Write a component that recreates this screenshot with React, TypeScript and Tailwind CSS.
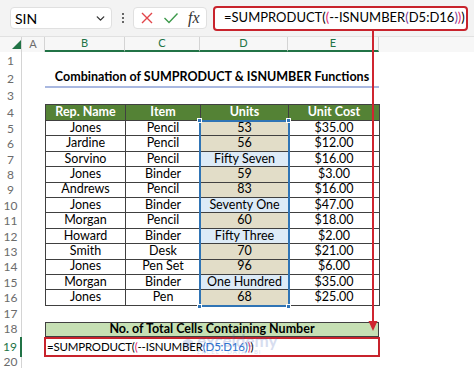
import React from "react";
import { ChevronDown } from "lucide-react";

type Row = { name: string; item: string; units: string; cost: string };

const rows: Row[] = [
  { name: "Jones", item: "Pencil", units: "53", cost: "$35.00" },
  { name: "Jardine", item: "Pencil", units: "56", cost: "$12.00" },
  { name: "Sorvino", item: "Pencil", units: "Fifty Seven", cost: "$16.00" },
  { name: "Jones", item: "Binder", units: "59", cost: "$3.00" },
  { name: "Andrews", item: "Pencil", units: "83", cost: "$16.00" },
  { name: "Jones", item: "Binder", units: "Seventy One", cost: "$47.00" },
  { name: "Morgan", item: "Pencil", units: "60", cost: "$18.00" },
  { name: "Howard", item: "Binder", units: "Fifty Three", cost: "$2.00" },
  { name: "Smith", item: "Desk", units: "70", cost: "$21.00" },
  { name: "Jones", item: "Pen Set", units: "96", cost: "$6.00" },
  { name: "Morgan", item: "Binder", units: "One Hundred", cost: "$35.00" },
  { name: "Jones", item: "Pen", units: "68", cost: "$25.00" },
];

// row number + column A gutter
const Gutter = ({ n, active }: { n: number; active?: boolean }) => (
  <>
    <div
      className={`w-[22px] shrink-0 flex items-center justify-center text-[12px] border-r ${
        active ? "text-[#217346] border-r-2 border-[#217346]" : "text-[#6b6b6b] border-[#d4d4d4]"
      }`}
    >
      {n}
    </div>
    <div className="w-[23px] shrink-0" />
  </>
);

export default function App() {
  const cell = "flex items-center justify-center border-r border-b border-[#404040]";
  return (
    <div className="relative w-[474px] h-[368px] overflow-hidden bg-white font-['Lato',sans-serif] text-black">
      {/* formula bar */}
      <div className="h-[37px] bg-[#f3f3f3] flex items-center pl-[10px] border-b border-[#e1e1e1]">
        <div className="w-[102px] h-[22px] bg-white rounded-[4px] border border-[#e0e0e0] flex items-center justify-between px-[4px] text-[14px]">
          <span>SIN</span>
          <ChevronDown size={13} strokeWidth={2.5} className="text-[#333]" />
        </div>
        <div className="w-[21px] flex flex-col items-center gap-[2px]">
          <span className="w-[2px] h-[2px] bg-[#666]" />
          <span className="w-[2px] h-[2px] bg-[#666]" />
          <span className="w-[2px] h-[2px] bg-[#666]" />
        </div>
        <div className="w-[74px] h-[22px] bg-white rounded-[4px] border border-[#e0e0e0] flex items-center justify-around px-[2px]">
          <svg width="14" height="14" viewBox="0 0 14 14">
            <path d="M2 2 L12 12 M12 2 L2 12" stroke="#e2454a" strokeWidth="1.4" fill="none" />
          </svg>
          <svg width="16" height="14" viewBox="0 0 16 14">
            <path d="M1.5 7 L6 11.5 L14.5 2.5" stroke="#3e9a4c" strokeWidth="1.4" fill="none" />
          </svg>
          <span className="font-['Liberation_Serif',serif] italic text-[16px] leading-none text-[#333]">fx</span>
        </div>
        <div className="ml-[6px] w-[255px] h-[25px] bg-white rounded-[4px] border-2 border-[#c8232c] flex items-center pl-[9px] text-[13px]">
          <span className="whitespace-nowrap">
            =SUMPRODUCT(<span className="text-[#e0286e]">(</span>--ISNUMBER<span className="text-[#7d3c98]">(</span>D5:D16
            <span className="text-[#7d3c98]">)</span>
            <span className="text-[#e0286e]">)</span>)
          </span>
        </div>
      </div>

      {/* column headers */}
      <div className="flex h-[15px] bg-[#f7f7f7] text-[11px] text-[#217346]">
        <div className="w-[22px] relative border-r border-[#d4d4d4]">
          <svg className="absolute left-[12px] top-[3px]" width="9" height="9" viewBox="0 0 9 9">
            <path d="M9 0 L9 9 L0 9 Z" fill="#217346" />
          </svg>
        </div>
        <div className="w-[23px] flex items-center justify-center text-[#6b6b6b] border-r border-[#d4d4d4]">A</div>
        <div className="w-[80px] flex items-center justify-center border-r border-[#d4d4d4] border-b-2 border-b-[#217346]">B</div>
        <div className="w-[75px] flex items-center justify-center border-r border-[#d4d4d4] border-b-2 border-b-[#217346]">C</div>
        <div className="w-[88px] flex items-center justify-center border-r border-[#d4d4d4] border-b-2 border-b-[#217346]">D</div>
        <div className="w-[91px] flex items-center justify-center border-r border-[#d4d4d4] border-b-2 border-b-[#217346]">E</div>
        <div className="flex-1" />
      </div>

      {/* row 1 */}
      <div className="flex h-[17px]">
        <Gutter n={1} />
      </div>
      {/* row 2 title */}
      <div className="flex h-[19px]">
        <Gutter n={2} />
        <div className="w-[334px] flex items-center justify-center font-bold text-[12.5px] border-b-2 border-[#a9b8e0]">
          Combination of SUMPRODUCT &amp; ISNUMBER Functions
        </div>
      </div>
      {/* row 3 */}
      <div className="flex h-[16px]">
        <Gutter n={3} />
      </div>
      {/* row 4 header */}
      <div className="flex h-[17px]">
        <Gutter n={4} />
        <div className="flex border-l border-t border-[#404040] bg-[#548235] text-white font-bold text-[12.5px]">
          <div className={`${cell} w-[80px]`}>Rep. Name</div>
          <div className={`${cell} w-[75px]`}>Item</div>
          <div className={`${cell} w-[88px]`}>Units</div>
          <div className={`${cell} w-[91px]`}>Unit Cost</div>
        </div>
      </div>
      {rows.map((r, i) => {
        const numeric = /^\d+$/.test(r.units);
        return (
          <div key={i} className="flex h-[15.42px]">
            <Gutter n={i + 5} />
            <div className="flex border-l border-[#404040] text-[12.5px]">
              <div className={`${cell} w-[80px]`}>{r.name}</div>
              <div className={`${cell} w-[75px]`}>{r.item}</div>
              <div className={`${cell} w-[88px] ${numeric ? "bg-[#e2ddc8]" : "bg-[#ddebf7]"}`}>{r.units}</div>
              <div className={`${cell} w-[91px]`}>{r.cost}</div>
            </div>
          </div>
        );
      })}
      {/* row 17 */}
      <div className="flex h-[16px]">
        <Gutter n={17} />
      </div>
      {/* row 18 */}
      <div className="flex h-[15px]">
        <Gutter n={18} />
        <div className="w-[334px] flex items-center justify-center border border-[#404040] bg-[#c6e0b4] font-bold text-[12.5px]">
          No. of Total Cells Containing Number
        </div>
      </div>
      {/* row 19 */}
      <div className="flex h-[20px]">
        <Gutter n={19} active />
        <div className="w-[336px] -ml-[1px] flex items-center border-2 border-[#c8232c] text-[11.5px] tracking-[-0.2px] pl-[1px]">
          <span className="whitespace-nowrap">
            =SUMPRODUCT(<span className="text-[#e0286e]">(</span>--ISNUMBER
            <span className="text-[#2e75d0]">(D5:D16)</span>
            <span className="text-[#e0286e]">)</span>)
          </span>
        </div>
      </div>
      {/* row 20 */}
      <div className="flex h-[11px]">
        <Gutter n={20} />
      </div>

      {/* selection around D5:D16 */}
      <div className="absolute left-[199px] top-[120px] w-[91px] h-[187px] border-2 border-[#2f74b5] pointer-events-none" />
      <span className="absolute left-[197px] top-[118px] w-[5px] h-[5px] bg-[#2f74b5] border border-white" />
      <span className="absolute left-[286px] top-[118px] w-[5px] h-[5px] bg-[#2f74b5] border border-white" />
      <span className="absolute left-[197px] top-[304px] w-[5px] h-[5px] bg-[#2f74b5] border border-white" />
      <span className="absolute left-[286px] top-[304px] w-[5px] h-[5px] bg-[#2f74b5] border border-white" />

      {/* arrow from formula bar */}
      <svg className="absolute left-[367px] top-[31px]" width="12" height="302" viewBox="0 0 12 302">
        <line x1="6" y1="0" x2="6" y2="292" stroke="#cf2530" strokeWidth="2" />
        <path d="M1.5 290 L10.5 290 L6 300 Z" fill="#cf2530" />
      </svg>

      {/* watermark */}
      <div className="absolute left-[182px] top-[332px] flex items-center gap-[3px] opacity-20 pointer-events-none">
        <svg width="12" height="12" viewBox="0 0 12 12">
          <path d="M1 3 L6 0.5 L11 3 L11 9 L6 11.5 L1 9 Z" fill="#3b5bb5" />
        </svg>
        <div className="flex flex-col leading-none">
          <span className="text-[17px] font-bold text-[#3b5bb5]">exceldemy</span>
          <span className="text-[6px] tracking-[1px] text-[#3b5bb5]">EXCEL · DATA · BI</span>
        </div>
      </div>
    </div>
  );
}
